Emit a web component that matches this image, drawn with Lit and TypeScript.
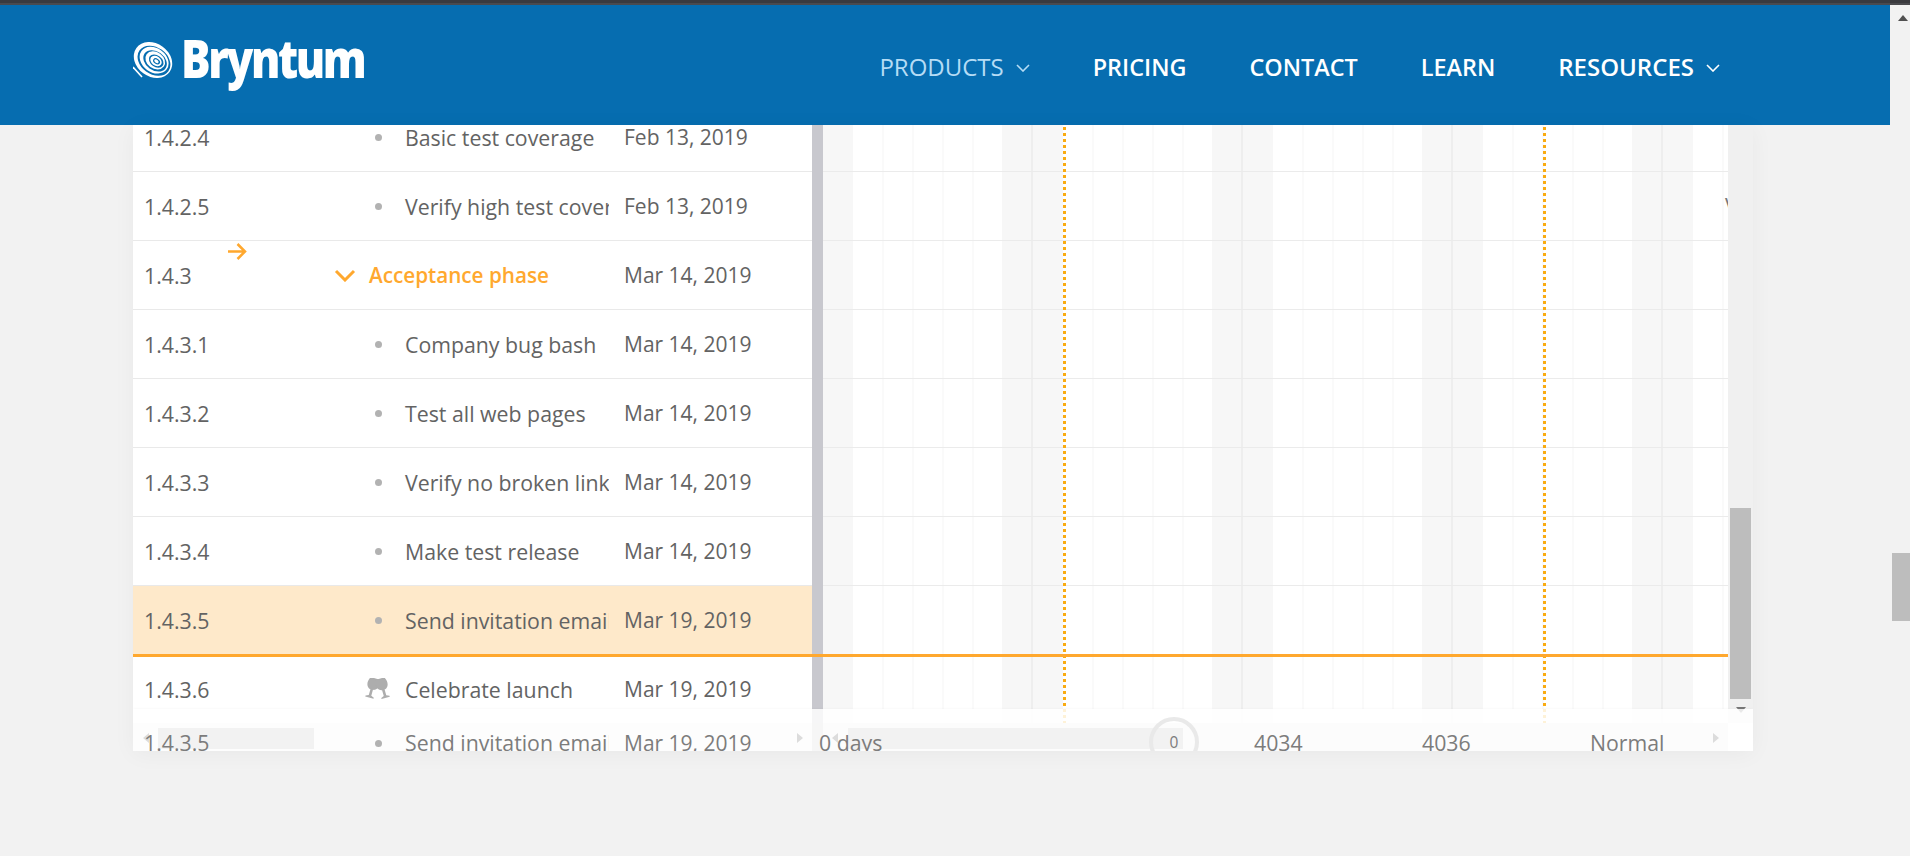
import { LitElement, html, css, svg } from "lit";
import { customElement } from "lit/decorators.js";

type Row = { wbs: string; name: string; date: string; kind?: "parent" | "clink"; hi?: boolean };

const rows: Row[] = [
  { wbs: "1.4.2.4", name: "Basic test coverage", date: "Feb 13, 2019" },
  { wbs: "1.4.2.5", name: "Verify high test coverage", date: "Feb 13, 2019" },
  { wbs: "1.4.3", name: "Acceptance phase", date: "Mar 14, 2019", kind: "parent" },
  { wbs: "1.4.3.1", name: "Company bug bash", date: "Mar 14, 2019" },
  { wbs: "1.4.3.2", name: "Test all web pages", date: "Mar 14, 2019" },
  { wbs: "1.4.3.3", name: "Verify no broken links", date: "Mar 14, 2019" },
  { wbs: "1.4.3.4", name: "Make test release", date: "Mar 14, 2019" },
  { wbs: "1.4.3.5", name: "Send invitation email", date: "Mar 19, 2019", hi: true },
  { wbs: "1.4.3.6", name: "Celebrate launch", date: "Mar 19, 2019", kind: "clink" },
];

const chevron = svg`<svg class="nav-chev" viewBox="0 0 14 8"><path d="M1 1l6 6 6-6" fill="none" stroke="currentColor" stroke-width="1.6"/></svg>`;

const glass = svg`<path d="M-3.800 -10.500h7.600c2 3.500 2.400 8.200-.5 10.600-.9.800-1.900 1.100-2.500 1.100v6l3 1.400v1h-8.600v-1l3-1.400v-6c-.6 0-1.600-.3-2.500-1.100-2.900-2.400-2.500-7.100-.5-10.600z"/>`;

// white and blue discs stacked off-centre give the swirl its uneven ring widths
const swirl: [number, number, number, number, string][] = [
  [20, 20, 20.5, 16.5, "#fff"],
  [21.2, 20, 17.8, 13.4, "#066db0"],
  [21, 19.5, 15.6, 12, "#fff"],
  [22.2, 19.5, 12.8, 9.4, "#066db0"],
  [22, 19, 10.6, 8.2, "#fff"],
  [23.2, 19, 8, 5.8, "#066db0"],
  [23, 19, 6.2, 4.6, "#fff"],
  [23.7, 19, 3.8, 2.6, "#066db0"],
  [23.5, 19, 2.4, 1.6, "#fff"],
];

@customElement("app-root")
export class AppRoot extends LitElement {
  static styles = css`
    :host {
      display: block;
      width: 1910px;
      height: 856px;
      overflow: hidden;
      background: #f2f2f2;
      font-family: "Open Sans", sans-serif;
      color: #636363;
    }

    .topbar {
      height: 5px;
      background: linear-gradient(#3a3a3e 0 3px, #4a4a4e 3px);
    }

    .page {
      display: flex;
      height: 851px;
    }

    .content {
      flex: 1;
    }

    .pagebar {
      width: 20px;
      display: flex;
      flex-direction: column;
      align-items: flex-end;
    }

    .pagebar-up {
      width: 0;
      height: 0;
      margin: 10px 2px 0 0;
      border: 5.5px solid transparent;
      border-top: 0;
      border-bottom: 6px solid #505050;
    }

    .pagebar-thumb {
      width: 18px;
      height: 68px;
      margin-top: 532px;
      background: #bdbdbd;
    }

    header {
      height: 120px;
      background: #066db0;
      display: flex;
      align-items: flex-start;
      justify-content: space-between;
      padding: 0 170px 0 133px;
    }

    .logo {
      display: flex;
      align-items: flex-start;
      gap: 8px;
      padding-top: 35px;
      color: #fff;
    }

    .logo svg {
      width: 40px;
      height: 40px;
    }

    .logo-text {
      display: block;
      width: 182px;
      margin-top: -2px;
      font-size: 53px;
      font-weight: 800;
      line-height: 40px;
      letter-spacing: -2.9px;
      transform: scaleX(0.83);
      transform-origin: left center;
    }

    nav {
      display: flex;
      gap: 63px;
      padding-top: 46px;
      font-size: 23.4px;
      line-height: 32px;
      font-weight: 600;
      color: #fff;
    }

    nav a {
      display: flex;
      align-items: center;
      gap: 12px;
    }

    nav a.drop {
      font-size: 24px;
    }

    nav a.current {
      color: #b5dcf5;
      font-weight: 400;
    }

    .nav-chev {
      width: 14px;
      height: 8px;
      margin-top: 2px;
    }

    .panel-wrap {
      width: 1620px;
      margin-left: 133px;
      box-shadow: 0 3px 22px rgba(0, 0, 0, 0.045);
    }

    .panel {
      position: relative;
      height: 626px;
      background: #fff;
      overflow: hidden;
      font-size: 21.3px;
    }

    .main {
      display: flex;
      height: 598px;
    }

    .locked {
      width: 679px;
      overflow: hidden;
    }

    .rows {
      margin-top: -22px;
    }

    .row {
      height: 69px;
      box-sizing: border-box;
      border-bottom: 1px solid #e9e9e9;
      display: grid;
      grid-template-columns: 190px 301px 188px;
      align-items: center;
    }

    .row.hi {
      background: #fee9ca;
    }

    .wbs {
      padding-left: 11px;
      position: relative;
    }

    .name {
      display: flex;
      align-items: center;
      white-space: nowrap;
      overflow: hidden;
      margin-right: 15px;
    }

    .date {
      font-size: 21px;
    }

    .ico {
      width: 82px;
      box-sizing: border-box;
      padding-left: 28px;
      flex: none;
      display: flex;
      justify-content: center;
    }

    .dot {
      width: 7px;
      height: 7px;
      border-radius: 50%;
      background: #b2b2b2;
    }

    .parent .name {
      color: #ffa82e;
      font-weight: 600;
      font-size: 20.7px;
    }

    .parent .ico {
      width: 46px;
      padding-left: 11px;
      justify-content: flex-start;
    }

    .chev {
      width: 22px;
      height: 13px;
    }

    .clink {
      width: 28px;
      height: 23px;
      fill: #adadad;
    }

    .arrow {
      position: absolute;
      left: 94px;
      top: -18px;
      width: 20px;
      height: 17px;
    }

    .splitter {
      width: 11px;
      background: #c8c8ce;
    }

    .gantt {
      position: relative;
      width: 905px;
      overflow: hidden;
      background: linear-gradient(
          to right,
          #f7f7f7 0 30px,
          #fff 30px 59px,
          #fafafa 59px 61px,
          #fff 61px 89px,
          #fafafa 89px 91px,
          #fff 91px 119px,
          #fafafa 119px 121px,
          #fff 121px 149px,
          #fafafa 149px 151px,
          #fff 151px 179px,
          #f7f7f7 179px 208px,
          #eeeeee 208px 210px
        )
        0 0 / 210px 100%;
    }

    .grow {
      height: 69px;
      box-sizing: border-box;
      border-bottom: 1px solid #ebebeb;
      overflow: hidden;
      line-height: 67px;
      white-space: nowrap;
      padding-left: 902px;
      color: #777;
    }

    .today {
      position: absolute;
      top: 0;
      bottom: 0;
      width: 3px;
      background: linear-gradient(#f9ab12 0 3px, transparent 3px) 0 2px / 3px 6px;
    }

    .vscroll {
      width: 25px;
      background: #f0f0f0;
      display: flex;
      flex-direction: column;
      align-items: center;
    }

    .vthumb {
      width: 21px;
      height: 191px;
      margin-top: 383px;
      background: #bdbdbd;
    }

    .vdown {
      width: 0;
      height: 0;
      margin-top: 8px;
      border: 5.5px solid transparent;
      border-bottom: 0;
      border-top: 6px solid #777;
    }

    .fade {
      position: absolute;
      left: 0;
      right: 0;
      top: 584px;
      height: 14px;
      background: rgba(255, 255, 255, 0.84);
      box-shadow: 0 -1px 2px rgba(0, 0, 0, 0.025);
    }

    .orange {
      position: absolute;
      left: 0;
      top: 529px;
      width: 1595px;
      height: 3px;
      background: #ffa82e;
    }

    .summary {
      position: relative;
      display: flex;
      height: 28px;
      overflow: hidden;
      line-height: 40px;
      color: #7c7c7c;
      background: #fff;
      white-space: nowrap;
    }

    .summary .locked {
      display: grid;
      grid-template-columns: 190px 301px 188px;
      background: #fdfdfd;
    }

    .s-split {
      width: 11px;
      background: #f6f6f6;
    }

    .s-cols {
      width: 905px;
      display: grid;
      grid-template-columns: 431px 168px 168px 138px;
      background: #fcfcfc;
    }

    .s-cols span:first-child {
      margin-left: -4px;
    }

    .s-end {
      width: 25px;
      background: #fff;
    }

    .scroll-rect {
      position: absolute;
      top: 5px;
      height: 21px;
      background: #f2f2f2;
    }

    .tri {
      position: absolute;
      top: 10px;
      width: 0;
      height: 0;
      border: 5.5px solid transparent;
    }

    .tri.r {
      border-right: 0;
      border-left: 6px solid #dcdcdc;
    }

    .tri.l {
      border-left: 0;
      border-right: 6px solid #dcdcdc;
    }

    .s-text {
      position: relative;
    }

    .ring {
      position: absolute;
      left: 1016px;
      top: 592px;
      width: 50px;
      height: 50px;
      box-sizing: border-box;
      border: 4px solid #e9e9e9;
      border-radius: 50%;
      text-align: center;
      font-size: 15.5px;
      line-height: 42px;
      color: #7c7c7c;
    }
  `;

  private logoMark() {
    return svg`<svg viewBox="0 0 40 40">
      <g transform="rotate(36 20 20)">
        ${swirl.map(([cx, cy, rx, ry, fill]) => svg`<ellipse cx=${cx} cy=${cy} rx=${rx} ry=${ry} fill=${fill}/>`)}
      </g>
      <path d="M-1 24L13 41H-1z" fill="#066db0"/>
      <path d="M0 27l9 10" stroke="#fff" stroke-width="1.600"/>
    </svg>`;
  }

  private icon(r: Row) {
    if (r.kind === "parent") {
      return svg`<svg class="chev" viewBox="0 0 22 13"><path d="M2 2l9 9 9-9" fill="none" stroke="#ffa82e" stroke-width="3"/></svg>`;
    }
    if (r.kind === "clink") {
      return svg`<svg class="clink" viewBox="0 0 28 23">
        <g transform="translate(8.500 10.500) rotate(16)">${glass}</g>
        <g transform="translate(19.500 10.500) rotate(-16)">${glass}</g>
      </svg>`;
    }
    return html`<div class="dot"></div>`;
  }

  private row(r: Row) {
    return html`<div class="row ${r.kind === "parent" ? "parent" : ""} ${r.hi ? "hi" : ""}">
      <div class="wbs">
        ${r.wbs}
        ${r.kind === "parent"
          ? svg`<svg class="arrow" viewBox="0 0 20 17"><path d="M1 8.500h17M10.500 1L18 8.500 10.500 16" fill="none" stroke="#ffa82e" stroke-width="2.500"/></svg>`
          : ""}
      </div>
      <div class="name">
        <div class="ico">${this.icon(r)}</div>
        <span>${r.name}</span>
      </div>
      <div class="date">${r.date}</div>
    </div>`;
  }

  render() {
    return html`
      <div class="topbar"></div>
      <div class="page">
        <div class="content">
          <header>
            <div class="logo">${this.logoMark()}<span class="logo-text">Bryntum</span></div>
            <nav>
              <a class="drop current">PRODUCTS ${chevron}</a>
              <a>PRICING</a>
              <a>CONTACT</a>
              <a>LEARN</a>
              <a class="drop">RESOURCES ${chevron}</a>
            </nav>
          </header>
          <div class="panel-wrap">
            <div class="panel">
              <div class="main">
                <div class="locked">
                  <div class="rows">${rows.map((r) => this.row(r))}</div>
                </div>
                <div class="splitter"></div>
                <div class="gantt">
                  <div class="rows">
                    ${rows.map(
                      (r, i) => html`<div class="grow">${i === 1 ? "Verify" : ""}</div>`
                    )}
                  </div>
                  ${[240, 720].map((x) => html`<div class="today" style="left:${x}px"></div>`)}
                </div>
                <div class="vscroll">
                  <div class="vthumb"></div>
                  <div class="vdown"></div>
                </div>
              </div>
              <div class="orange"></div>
              <div class="fade"></div>
              <div class="summary">
                <div class="scroll-rect" style="left:25px;width:156px"></div>
                <div class="scroll-rect" style="left:715px;width:335px"></div>
                <div class="tri l" style="left:10px"></div>
                <div class="tri r" style="left:664px"></div>
                <div class="tri l" style="left:699px"></div>
                <div class="tri r" style="left:1580px"></div>
                <div class="locked">
                  <div class="wbs s-text">1.4.3.5</div>
                  <div class="name s-text">
                    <div class="ico"><div class="dot"></div></div>
                    <span>Send invitation email</span>
                  </div>
                  <div class="date s-text">Mar 19, 2019</div>
                </div>
                <div class="s-split"></div>
                <div class="s-cols">
                  <span class="s-text">0 days</span>
                  <span class="s-text">4034</span>
                  <span class="s-text">4036</span>
                  <span class="s-text">Normal</span>
                </div>
                <div class="s-end"></div>
              </div>
              <div class="ring">0</div>
            </div>
          </div>
        </div>
        <div class="pagebar">
          <div class="pagebar-up"></div>
          <div class="pagebar-thumb"></div>
        </div>
      </div>
    `;
  }
}
